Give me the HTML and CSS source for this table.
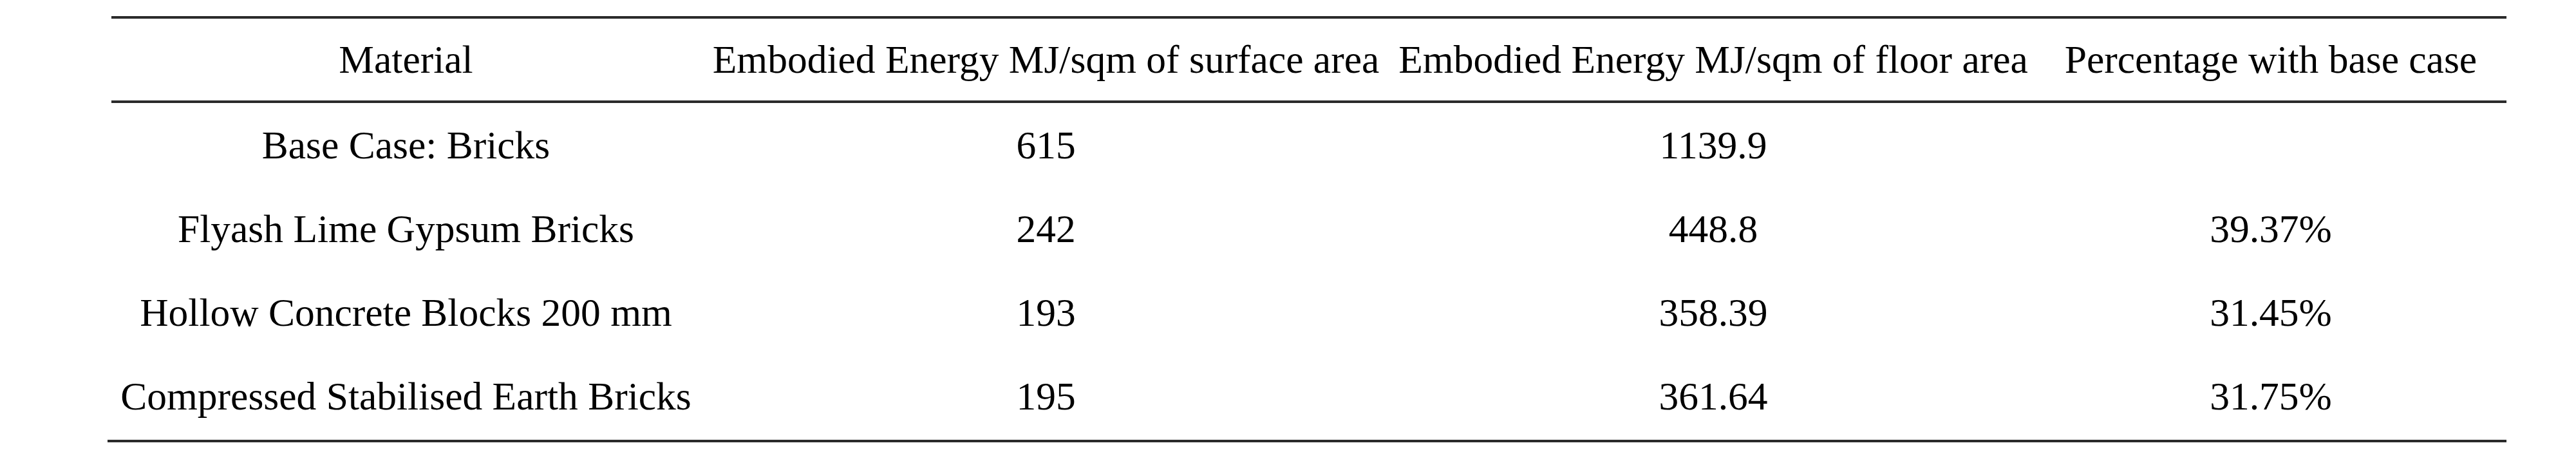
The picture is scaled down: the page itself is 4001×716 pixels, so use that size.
FILE: index.html
```html
<!DOCTYPE html>
<html lang="en">
<head>
<meta charset="utf-8">
<title>Embodied Energy Table</title>
<link rel="stylesheet" href="styles.css">
</head>
<body>
<div class="table-wrap">
  <table class="data">
    <colgroup>
      <col class="c1"><col class="c2"><col class="c3"><col class="c4">
    </colgroup>
    <thead>
      <tr>
        <th>Material</th>
        <th>Embodied Energy MJ/sqm of surface area</th>
        <th>Embodied Energy MJ/sqm of floor area</th>
        <th>Percentage with base case</th>
      </tr>
    </thead>
    <tbody>
      <tr><td>Base Case: Bricks</td><td>615</td><td>1139.9</td><td></td></tr>
      <tr><td>Flyash Lime Gypsum Bricks</td><td>242</td><td>448.8</td><td>39.37%</td></tr>
      <tr><td>Hollow Concrete Blocks 200 mm</td><td>193</td><td>358.39</td><td>31.45%</td></tr>
      <tr><td>Compressed Stabilised Earth Bricks</td><td>195</td><td>361.64</td><td>31.75%</td></tr>
    </tbody>
  </table>
</div>
</body>
</html>
```

FILE: styles.css
```css
html, body {
  margin: 0;
  padding: 0;
  background: #ffffff;
}

body {
  font-family: "Liberation Serif", "Times New Roman", serif;
  color: #000000;
}

.table-wrap {
  margin-top: 25px;
  margin-left: 167px;
  width: 3726px;
  padding-bottom: 3px;
  border-bottom: 4px solid #2b2b2b;
}

.data {
  margin-left: 6px;
  width: 3720px;
  table-layout: fixed;
  border-collapse: separate;
  border-spacing: 0;
  border-top: 4px solid #2b2b2b;
  font-size: 61.5px;
}

.c1 { width: 915px; }
.c2 { width: 1073px; }
.c3 { width: 1000px; }
.c4 { width: 732px; }

.data th,
.data td {
  padding: 0;
  text-align: center;
  white-space: nowrap;
  font-weight: normal;
  vertical-align: top;
}

.data th {
  line-height: 127px;
  border-bottom: 4px solid #2b2b2b;
}

.data td {
  line-height: 130px;
  height: 130px;
}
```
